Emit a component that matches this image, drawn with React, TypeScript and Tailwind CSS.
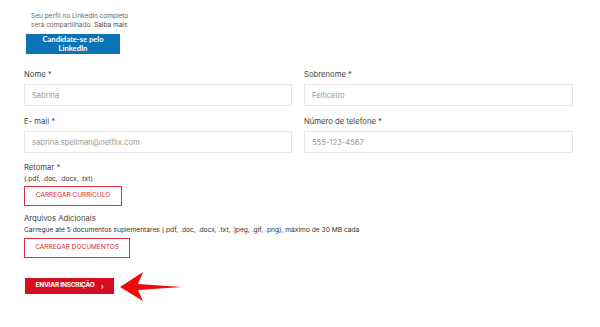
import React from "react";

const font = { fontFamily: "Inter, 'Noto Sans', sans-serif" };

function Field({ label, placeholder }: { label: string; placeholder: string }) {
    return (
        <div className="flex flex-col">
            <label className="text-[7.7px] leading-[12px] text-[#444]">{label}</label>
            <input
                placeholder={placeholder}
                className="mt-[3px] h-[22px] w-full border border-[#e6e6e6] px-[7px] text-[7.6px] placeholder:text-[#999] outline-none"
            />
        </div>
    );
}

export default function App() {
    return (
        <div className="w-[600px] h-[327px] bg-white relative overflow-hidden" style={font}>
            <div className="pl-[24px] pt-[12px]">
                <div className="pl-[7px] text-[6.5px] leading-[9px] text-[#666]">
                    <div>Seu perfil no LinkedIn completo</div>
                    <div>
                        será compartilhado. <span className="text-[#444]">Saiba mais</span>
                    </div>
                </div>
                <button
                    className="mt-[4px] ml-[2px] w-[94px] h-[20px] bg-[#0a73b5] text-white text-[7.6px] leading-[9px] font-bold flex flex-col items-center justify-center"
                    style={{ fontFamily: "Lato, 'Open Sans', sans-serif" }}
                >
                    <span>Candidate-se pelo</span>
                    <span>LinkedIn</span>
                </button>

                <div className="mt-[15px] grid grid-cols-[268px_269px] gap-x-[12px] gap-y-[10px]">
                    <Field label="Nome *" placeholder="Sabrina" />
                    <Field label="Sobrenome *" placeholder="Feiticeiro" />
                    <Field label="E- mail *" placeholder="sabrina.spellman@netflix.com" />
                    <Field label="Número de telefone *" placeholder="555-123-4567" />
                </div>

                <div className="mt-[9px] text-[7.7px] leading-[12px] text-[#444]">Retomar *</div>
                <div className="text-[6.6px] leading-[10px] text-[#333]">(.pdf, .doc, .docx, .txt)</div>
                <button className="mt-[2px] w-[98px] h-[20px] border border-[#e0303a] text-[#d81f26] text-[6.5px] flex items-center justify-center">
                    CARREGAR CURRÍCULO
                </button>

                <div className="mt-[7px] text-[7.7px] leading-[12px] text-[#444]">Arquivos Adicionais</div>
                <div className="text-[6.65px] leading-[10px] text-[#333]">
                    Carregue até 5 documentos suplementares (.pdf, .doc, .docx, .txt, .jpeg, .gif, .png), máximo de 30 MB cada
                </div>
                <button className="mt-[3px] w-[106px] h-[20px] border border-[#e0303a] text-[#d81f26] text-[6.5px] flex items-center justify-center">
                    CARREGAR DOCUMENTOS
                </button>

                <div className="mt-[20px] flex items-center">
                    <button className="ml-[1px] w-[89px] h-[16px] bg-[#d50d1e] text-white text-[6.5px] font-bold tracking-[-0.2px] flex items-center justify-center gap-[6px]">
                        <span>ENVIAR INSCRIÇÃO</span>
                        <span className="text-[8px] font-normal">›</span>
                    </button>
                </div>
            </div>
            <svg className="absolute left-0 top-0" width="600" height="327" viewBox="0 0 600 327">
                <path d="M120 287 L143 272 L138 284 L182 287 L138 290 L143 301 Z" fill="#ee0a0a" />
            </svg>
        </div>
    );
}
